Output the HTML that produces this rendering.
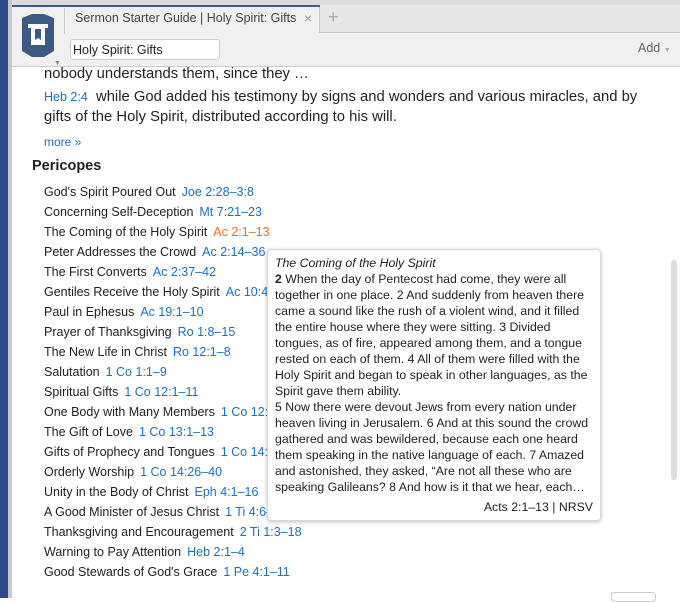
<!DOCTYPE html>
<html><head><meta charset="utf-8"><style>
*{margin:0;padding:0;box-sizing:border-box}
body{width:680px;height:598px;overflow:hidden;background:#fff;font-family:"Liberation Sans",sans-serif;position:relative;color:#222}
.a{position:absolute;white-space:nowrap}
.blue{color:#1a6fc4}
.list div{position:absolute;left:44px;font-size:12.5px;white-space:nowrap;color:#222}
.list span{color:#1a6fc4;margin-left:6px}
</style></head><body>
<div class="a" style="left:0;top:0;width:8px;height:598px;background:#2d4a86"></div>
<div class="a" style="left:8px;top:0;width:4px;height:598px;background:#c8c8c8"></div>
<div class="a" style="left:12px;top:0;width:668px;height:5px;background:#dcdcdc"></div>
<div class="a" style="left:12px;top:5px;width:668px;height:28px;background:#e8e8e8;border-bottom:1px solid #c8c8c8"></div>
<div class="a" style="left:12px;top:5px;width:308px;height:2px;background:#3c5a8a"></div>
<div class="a" style="left:12px;top:7px;width:308px;height:27px;background:#f0f0f0;border-right:1px solid #ccc"></div>
<div class="a" style="left:12px;top:33px;width:668px;height:34px;background:#f0f0f0;border-bottom:1px solid #ccc"></div>
<div class="a" style="left:64px;top:8px;width:1px;height:26px;background:#ccc"></div>
<svg class="a" style="left:21px;top:13px" width="34" height="46" viewBox="0 0 34 46"><polygon points="1,5 11,1 23,1 33,5 33,38 23,44 11,44 1,38" fill="#3d5a82"/><rect x="7" y="11" width="20" height="4" fill="#fff"/><path d="M10 15h14v17H10z" fill="#fff"/><path d="M14 16h6v11l-3-2-3 2z" fill="#3d5a82"/></svg>
<div class="a" style="left:54px;top:60px;font-size:7px;color:#888">▼</div>
<div class="a" style="left:75px;top:11px;font-size:12.5px;color:#444">Sermon Starter Guide | Holy Spirit: Gifts</div>
<div class="a" style="left:304px;top:10px;font-size:14px;color:#999">×</div>
<div class="a" style="left:328px;top:7px;font-size:18px;color:#aaa">+</div>
<div class="a" style="left:70px;top:39px;width:150px;height:21px;background:#fff;border:1px solid #ccc;border-radius:3px;font-size:12.5px;padding:3px 2px;color:#222">Holy Spirit: Gifts</div>
<div class="a" style="left:638px;top:41px;font-size:12.5px;color:#666">Add <span style="font-size:7px;color:#aaa">▼</span></div>
<div class="a" style="left:44px;top:66px;font-size:14.8px">nobody understands them, since they …</div>
<div class="a" style="left:44px;top:89px;font-size:14.8px"><span class="blue" style="font-size:12.5px">Heb 2:4</span>&nbsp; while God added his testimony by signs and wonders and various miracles, and by</div>
<div class="a" style="left:44px;top:109px;font-size:14.8px">gifts of the Holy Spirit, distributed according to his will.</div>
<div class="a blue" style="left:44px;top:135px;font-size:12px">more »</div>
<div class="a" style="left:32px;top:158px;font-size:14.5px;font-weight:bold">Pericopes</div>
<div class="list">
<div style="top:185px">God's Spirit Poured Out<span>Joe 2:28–3:8</span></div>
<div style="top:205px">Concerning Self-Deception<span>Mt 7:21–23</span></div>
<div style="top:225px">The Coming of the Holy Spirit<span style="color:#f07020">Ac 2:1–13</span></div>
<div style="top:245px">Peter Addresses the Crowd<span>Ac 2:14–36</span></div>
<div style="top:265px">The First Converts<span>Ac 2:37–42</span></div>
<div style="top:285px">Gentiles Receive the Holy Spirit<span>Ac 10:44</span></div>
<div style="top:305px">Paul in Ephesus<span>Ac 19:1–10</span></div>
<div style="top:325px">Prayer of Thanksgiving<span>Ro 1:8–15</span></div>
<div style="top:345px">The New Life in Christ<span>Ro 12:1–8</span></div>
<div style="top:365px">Salutation<span>1 Co 1:1–9</span></div>
<div style="top:385px">Spiritual Gifts<span>1 Co 12:1–11</span></div>
<div style="top:405px">One Body with Many Members<span>1 Co 12:1</span></div>
<div style="top:425px">The Gift of Love<span>1 Co 13:1–13</span></div>
<div style="top:445px">Gifts of Prophecy and Tongues<span>1 Co 14:1</span></div>
<div style="top:465px">Orderly Worship<span>1 Co 14:26–40</span></div>
<div style="top:485px">Unity in the Body of Christ<span>Eph 4:1–16</span></div>
<div style="top:505px">A Good Minister of Jesus Christ<span>1 Ti 4:6–</span></div>
<div style="top:525px">Thanksgiving and Encouragement<span>2 Ti 1:3–18</span></div>
<div style="top:545px">Warning to Pay Attention<span>Heb 2:1–4</span></div>
<div style="top:565px">Good Stewards of God's Grace<span>1 Pe 4:1–11</span></div>
</div>
<div class="a" style="left:267px;top:249px;width:334px;height:272px;background:#fff;border:1px solid #d8d8d8;border-radius:4px;box-shadow:0 1px 4px rgba(0,0,0,.25);padding:5px 7px;font-size:12.3px;line-height:16px;white-space:normal">
<div style="font-style:italic">The Coming of the Holy Spirit</div>
<b>2</b> When the day of Pentecost had come, they were all together in one place. 2 And suddenly from heaven there came a sound like the rush of a violent wind, and it filled the entire house where they were sitting. 3 Divided tongues, as of fire, appeared among them, and a tongue rested on each of them. 4 All of them were filled with the Holy Spirit and began to speak in other languages, as the Spirit gave them ability.<br>5 Now there were devout Jews from every nation under heaven living in Jerusalem. 6 And at this sound the crowd gathered and was bewildered, because each one heard them speaking in the native language of each. 7 Amazed and astonished, they asked, “Are not all these who are speaking Galileans? 8 And how is it that we hear, each…
<div style="text-align:right;margin-top:4px">Acts 2:1–13 | NRSV</div>
</div>
<div class="a" style="left:671px;top:260px;width:6px;height:220px;background:#ddd;border-radius:3px"></div>
<div class="a" style="left:611px;top:592px;width:45px;height:10px;border:1px solid #ccc;border-radius:4px"></div>
</body></html>
